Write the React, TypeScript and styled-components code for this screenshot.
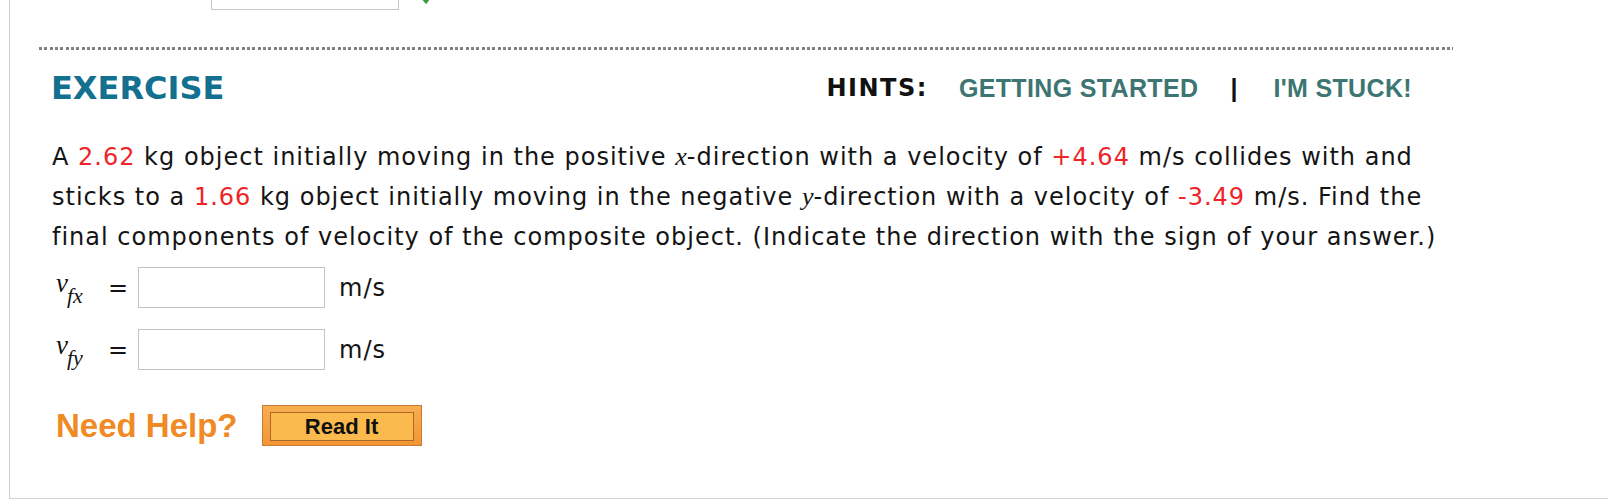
import React from 'react'
import styled, { createGlobalStyle } from 'styled-components'

const GlobalStyle = createGlobalStyle`
	body {
		margin: 0;
		background: #fff;
		font-family: "DejaVu Sans", Verdana, sans-serif;
		color: #141414;
	}
`

const Panel = styled.div`
	margin-left: 9px;
	border-left: 1px solid #d2d2d2;
	border-bottom: 1px solid #d2d2d2;
	padding: 0 0 52px 29px;
`

const Section = styled.div`
	width: 1414px;
`

const Remnant = styled.div`
	height: 10px;
	overflow: hidden;
	display: flex;
	align-items: flex-end;
	padding-left: 172px;
	gap: 20px;
`

const OldInput = styled.div`
	width: 186px;
	height: 30px;
	border: 1px solid #c6c6c6;
	background: #fff;
`

const Check = styled.svg`
	margin-bottom: 6px;
	flex: none;
`

const Dotted = styled.div`
	margin-top: 37px;
	height: 3px;
	background-image: repeating-linear-gradient(to right, #808080 0 3px, transparent 3px 5.333px);
`

const HeadRow = styled.div`
	margin-top: 22px;
	display: flex;
	align-items: center;
	justify-content: space-between;
	padding: 0 41px 0 12px;
	h2 {
		margin: 0;
		font-size: 32px;
		line-height: 32px;
		font-weight: bold;
		color: #13708f;
	}
`

const Hints = styled.div`
	display: flex;
	align-items: center;
	font-family: "Liberation Sans", Arial, sans-serif;
	font-size: 25px;
	font-weight: bold;
`

const HintLabel = styled.span`
	font-family: "DejaVu Sans", Verdana, sans-serif;
	font-size: 24px;
	letter-spacing: 1.5px;
	color: #111;
	margin-right: 31px;
`

const HintLink = styled.span`
	color: #3c7571;
	letter-spacing: 0.35px;
`

const Pipe = styled.span`
	color: #111;
	margin: 0 36px 0 32px;
`

const Body = styled.div`
	padding-left: 13px;
`

const Question = styled.p`
	margin: 33px 0 0;
	width: 1385px;
	font-size: 24px;
	line-height: 40px;
	letter-spacing: 1px;
`

const Num = styled.span`
	color: #ee2428;
`

const MathVar = styled.i`
	font-family: "Liberation Serif", "Times New Roman", serif;
	font-size: 26px;
	letter-spacing: 0;
`

const Answers = styled.div`
	margin-top: 10px;
	display: flex;
	flex-direction: column;
	gap: 21px;
`

const Row = styled.div`
	display: flex;
	align-items: center;
	height: 41px;
	padding-left: 4px;
	font-size: 24px;
	letter-spacing: 1px;
`

const Label = styled.span`
	display: inline-block;
	width: 52px;
	margin-top: 2px;
	font-family: "Liberation Serif", "Times New Roman", serif;
	font-style: italic;
	font-size: 27px;
	line-height: 1;
	letter-spacing: 0;
	sub {
		font-size: 22px;
		vertical-align: -11px;
		margin-left: -1px;
	}
`

const Equals = styled.span`
	width: 30px;
`

const Field = styled.input`
	width: 187px;
	height: 41px;
	box-sizing: border-box;
	border: 1px solid #c4c4c4;
	margin: 0 14px 0 0;
	padding: 0 6px;
	font-size: 20px;
	outline: none;
`

const HelpRow = styled.div`
	margin-top: 35px;
	display: flex;
	align-items: center;
	gap: 24px;
	padding-left: 4px;
`

const NeedHelp = styled.span`
	font-family: "Liberation Sans", Arial, sans-serif;
	font-weight: bold;
	font-size: 33px;
	color: #ef8a24;
`

const ReadIt = styled.button`
	width: 160px;
	height: 41px;
	padding: 6px 7px;
	box-sizing: border-box;
	border: 1px solid #c97a33;
	background: linear-gradient(#f8ad50, #f39634);
	cursor: pointer;
	span {
		display: flex;
		align-items: center;
		justify-content: center;
		height: 100%;
		border: 1px solid #a9692b;
		background: #fbba4e;
		font-family: "Liberation Sans", Arial, sans-serif;
		font-weight: bold;
		font-size: 22px;
		color: #111;
	}
`

export default function App() {
	return (
		<>
			<GlobalStyle />
			<Panel>
				<Section>
					<Remnant>
						<OldInput />
						<Check width="18" height="18" viewBox="0 0 18 18">
							<path d="M2 9 L7 15 L16 3" fill="none" stroke="#3b9a3b" strokeWidth="4" />
						</Check>
					</Remnant>
					<Dotted />
					<HeadRow>
						<h2>EXERCISE</h2>
						<Hints>
							<HintLabel>HINTS:</HintLabel>
							<HintLink>GETTING STARTED</HintLink>
							<Pipe>|</Pipe>
							<HintLink>I'M STUCK!</HintLink>
						</Hints>
					</HeadRow>
					<Body>
						<Question>
							A <Num>2.62</Num> kg object initially moving in the positive <MathVar>x</MathVar>-direction with a velocity of <Num>+4.64</Num> m/s collides with and sticks to a <Num>1.66</Num> kg object initially moving in the negative <MathVar>y</MathVar>-direction with a velocity of <Num>-3.49</Num> m/s. Find the final components of velocity of the composite object. (Indicate the direction with the sign of your answer.)
						</Question>
						<Answers>
							<Row>
								<Label>v<sub>fx</sub></Label>
								<Equals>=</Equals>
								<Field type="text" />
								<span>m/s</span>
							</Row>
							<Row>
								<Label>v<sub>fy</sub></Label>
								<Equals>=</Equals>
								<Field type="text" />
								<span>m/s</span>
							</Row>
						</Answers>
						<HelpRow>
							<NeedHelp>Need Help?</NeedHelp>
							<ReadIt><span>Read It</span></ReadIt>
						</HelpRow>
					</Body>
				</Section>
			</Panel>
		</>
	)
}
